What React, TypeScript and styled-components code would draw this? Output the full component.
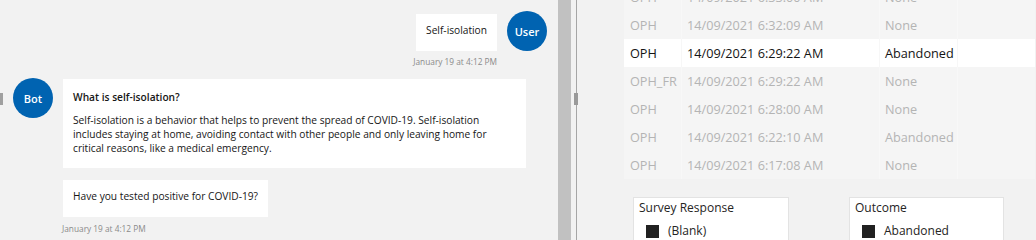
import React from 'react'
import styled, { createGlobalStyle } from 'styled-components'

interface Visit {
  team: string;
  started: string;
  outcome: string;
}

const visits: Visit[] = [
  { team: 'OPH', started: '14/09/2021 6:33:00 AM', outcome: 'None' },
  { team: 'OPH', started: '14/09/2021 6:32:09 AM', outcome: 'None' },
  { team: 'OPH', started: '14/09/2021 6:29:22 AM', outcome: 'Abandoned' },
  { team: 'OPH_FR', started: '14/09/2021 6:29:22 AM', outcome: 'None' },
  { team: 'OPH', started: '14/09/2021 6:28:00 AM', outcome: 'None' },
  { team: 'OPH', started: '14/09/2021 6:22:10 AM', outcome: 'Abandoned' },
  { team: 'OPH', started: '14/09/2021 6:17:08 AM', outcome: 'None' }
]

const SELECTED_ROW = 2

const GlobalStyle = createGlobalStyle`
  html, body {
    margin: 0;
    padding: 0;
    width: 1036px;
    height: 240px;
    overflow: hidden;
    background: #f2f2f2;
  }
`

const Page = styled.div`
  display: flex;
  width: 1036px;
  height: 240px;
  overflow: hidden;
  background: #f2f2f2;
`

/* ---------- chat side ---------- */

const ChatPane = styled.div`
  width: 558px;
  flex-shrink: 0;
  display: flex;
`

const EdgeGrip = styled.div`
  width: 3px;
  height: 12px;
  margin-top: 93px;
  background: #a0a0a0;
  flex-shrink: 0;
`

const Transcript = styled.div`
  flex: 1;
  display: flex;
  flex-direction: column;
  padding: 11px 11px 0 10px;
  font-family: "Open Sans", sans-serif;
  font-size: 10.2px;
  color: #161616;
`

const Row = styled.div<{ $fromUser?: boolean }>`
  display: flex;
  gap: 10px;
  justify-content: ${(p) => (p.$fromUser ? 'flex-end' : 'flex-start')};
  align-items: ${(p) => (p.$fromUser ? 'flex-end' : 'flex-start')};
  margin-top: ${(p) => (p.$fromUser ? '0' : '10px')};
`

const Avatar = styled.div`
  width: 40px;
  height: 40px;
  border-radius: 50%;
  background: #0063b1;
  color: #fff;
  font-weight: 600;
  font-size: 11px;
  display: flex;
  align-items: center;
  justify-content: center;
  flex-shrink: 0;
`

const Stack = styled.div`
  display: flex;
  flex-direction: column;
  align-items: flex-start;
  gap: 12px;
  margin-top: 1px;
`

const Bubble = styled.div<{ $width?: number }>`
  background: #fff;
  padding: 9px 10px 13px;
  line-height: 15px;
  white-space: nowrap;
  box-sizing: border-box;
  width: ${(p) => (p.$width ? `${p.$width}px` : 'auto')};
`

const CardTitle = styled.div`
  font-weight: 600;
  line-height: 15px;
  margin: 2px 0 8px;
`

const CardText = styled.p`
  margin: 0;
  line-height: 14px;
`

const Stamp = styled.div<{ $right?: boolean }>`
  font-size: 8.3px;
  line-height: 12px;
  color: #8a8a8a;
  margin-top: ${(p) => (p.$right ? '5px' : '6px')};
  align-self: ${(p) => (p.$right ? 'flex-end' : 'flex-start')};
  margin-right: ${(p) => (p.$right ? '50px' : '0')};
  margin-left: ${(p) => (p.$right ? '0' : '49px')};
`

/* ---------- splitter ---------- */

const Splitter = styled.div`
  width: 13px;
  flex-shrink: 0;
  background: #c1c1c1;
`

const Gutter = styled.div`
  width: 5px;
  flex-shrink: 0;
`

const Rail = styled.div`
  width: 1px;
  flex-shrink: 0;
  background: #a6a6a6;
  position: relative;
`

const RailGrip = styled.div`
  position: absolute;
  left: -2px;
  top: 93px;
  width: 4px;
  height: 12px;
  background: #9a9a9a;
`

/* ---------- report side ---------- */

const Report = styled.div`
  flex: 1;
  display: flex;
  flex-direction: column;
  font-family: "Open Sans", sans-serif;
`

const Table = styled.div`
  margin: -17px 0 0 47px;
  width: 411px;
  display: grid;
  grid-template-columns: 57px 198px 78px 78px;
  grid-auto-rows: 28px;
  font-size: 12.7px;
`

const Cell = styled.div<{ $active: boolean; $first?: boolean }>`
  display: flex;
  align-items: center;
  padding-left: 5px;
  white-space: nowrap;
  background: ${(p) => (p.$active ? '#ffffff' : '#f5f5f5')};
  color: ${(p) => (p.$active ? '#141414' : '#b4b4b4')};
  border-left: 1px solid ${(p) => (p.$first ? 'transparent' : p.$active ? '#f7f7f7' : '#f8f8f8')};
`

const Legends = styled.div`
  display: flex;
  gap: 60px;
  padding-left: 56px;
  margin-top: 18px;
`

const LegendBox = styled.div<{ $width: number }>`
  width: ${(p) => p.$width}px;
  height: 70px;
  box-sizing: border-box;
  background: #fff;
  border: 1px solid #e3e3e3;
  padding: 2px 0 0 5px;
  font-size: 12px;
  color: #252423;
`

const LegendTitle = styled.div`
  line-height: 16px;
`

const LegendItem = styled.div`
  display: flex;
  align-items: center;
  gap: 9px;
  margin: 7px 0 0 7px;
  line-height: 16px;
`

const Swatch = styled.span`
  width: 13px;
  height: 13px;
  background: #212121;
`

const App = (): JSX.Element => {
  return (
    <Page>
      <GlobalStyle />
      <ChatPane>
        <EdgeGrip />
        <Transcript>
          <Row $fromUser>
            <Bubble>Self-isolation</Bubble>
            <Avatar>User</Avatar>
          </Row>
          <Stamp $right>January 19 at 4:12 PM</Stamp>
          <Row>
            <Avatar>Bot</Avatar>
            <Stack>
              <Bubble $width={463}>
                <CardTitle>What is self-isolation?</CardTitle>
                <CardText>
                  Self-isolation is a behavior that helps to prevent the spread of COVID-19. Self-isolation<br />
                  includes staying at home, avoiding contact with other people and only leaving home for<br />
                  critical reasons, like a medical emergency.
                </CardText>
              </Bubble>
              <Bubble>Have you tested positive for COVID-19?</Bubble>
            </Stack>
          </Row>
          <Stamp>January 19 at 4:12 PM</Stamp>
        </Transcript>
      </ChatPane>
      <Splitter />
      <Gutter />
      <Rail>
        <RailGrip />
      </Rail>
      <Report>
        <Table>
          {visits.map((v, i) => {
            const active = i === SELECTED_ROW
            return (
              <React.Fragment key={`${v.team}-${v.started}-${i}`}>
                <Cell $active={active} $first>{v.team}</Cell>
                <Cell $active={active}>{v.started}</Cell>
                <Cell $active={active}>{v.outcome}</Cell>
                <Cell $active={active} />
              </React.Fragment>
            )
          })}
        </Table>
        <Legends>
          <LegendBox $width={156}>
            <LegendTitle>Survey Response</LegendTitle>
            <LegendItem><Swatch />(Blank)</LegendItem>
          </LegendBox>
          <LegendBox $width={155}>
            <LegendTitle>Outcome</LegendTitle>
            <LegendItem><Swatch />Abandoned</LegendItem>
          </LegendBox>
        </Legends>
      </Report>
    </Page>
  )
}

export default App
